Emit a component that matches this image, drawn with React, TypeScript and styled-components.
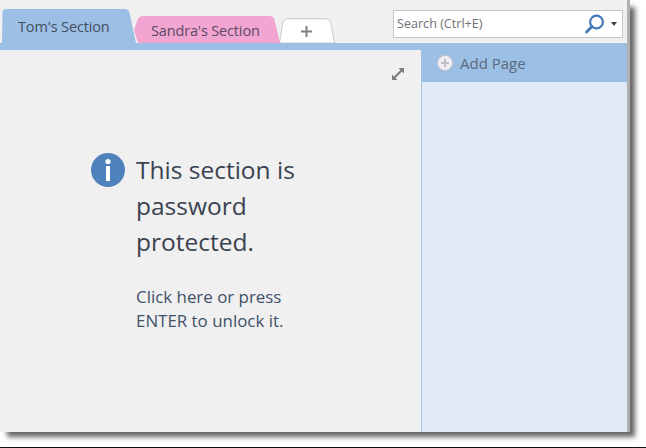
import React from "react";
import styled, { createGlobalStyle } from "styled-components";

const GlobalStyle = createGlobalStyle`
  html, body {
    margin: 0;
    padding: 0;
    background: #fff;
  }
  body {
    font-family: "Open Sans", "Noto Sans", "Liberation Sans", sans-serif;
  }
`;

const Shot = styled.div`
  width: 646px;
  height: 448px;
  box-sizing: border-box;
  border-bottom: 1px solid #111;
  background: #fff;
  overflow: hidden;
`;

const Win = styled.div`
  width: 630px;
  height: 432px;
  box-sizing: border-box;
  background: #f0f0f0;
  border-right: 3px solid #b0b0b0;
  box-shadow: 6px 6px 5px -1px #666;
  display: flex;
  flex-direction: column;
`;

const TopBar = styled.div`
  height: 43px;
  flex: none;
  display: flex;
  align-items: flex-end;
  padding-left: 2px;
  position: relative;
`;

const TabWrap = styled.div<{ $w: number; $h: number; $ml?: number; $z?: number }>`
  position: relative;
  width: ${(p) => p.$w}px;
  height: ${(p) => p.$h}px;
  margin-left: ${(p) => p.$ml ?? 0}px;
  z-index: ${(p) => p.$z ?? 0};
  display: flex;
  justify-content: flex-start;
`;

const TabShape = styled.svg`
  position: absolute;
  inset: 0;
  display: block;
`;

const TabLabel = styled.span<{ $color: string; $top: number; $left: number }>`
  position: relative;
  font-size: 14.5px;
  line-height: 20px;
  letter-spacing: -0.15px;
  color: ${(p) => p.$color};
  margin-top: ${(p) => p.$top}px;
  margin-left: ${(p) => p.$left}px;
`;

const PlusMark = styled.svg`
  position: relative;
  margin: 8px 0 0 22px;
`;

const SearchBox = styled.div`
  position: absolute;
  left: 393px;
  top: 10px;
  width: 230px;
  height: 28px;
  box-sizing: border-box;
  background: #fff;
  border: 1px solid #c6c6c6;
  display: flex;
  align-items: center;
  padding: 0 5px 0 3px;
`;

const SearchText = styled.span`
  flex: 1;
  font-size: 12.6px;
  color: #6f6f78;
  margin-top: -1px;
`;

const Caret = styled.span`
  width: 0;
  height: 0;
  margin-left: 6px;
  border-left: 3.5px solid transparent;
  border-right: 3.5px solid transparent;
  border-top: 4px solid #444;
`;

const Body = styled.div`
  flex: 1;
  display: flex;
  min-height: 0;
`;

const Main = styled.div`
  width: 421px;
  flex: none;
  display: flex;
  flex-direction: column;
`;

const Strip = styled.div`
  height: 7px;
  flex: none;
  background: #9bbfe5;
`;

const MainInner = styled.div`
  flex: 1;
  position: relative;
  display: flex;
  padding: 103px 0 0 91px;
  gap: 11px;
`;

const ExpandIcon = styled.svg`
  position: absolute;
  right: 16px;
  top: 17px;
`;

const InfoIcon = styled.svg`
  flex: none;
`;

const Message = styled.div`
  width: 200px;
`;

const Heading = styled.div`
  font-size: 24.5px;
  line-height: 36px;
  color: #3b4250;
  margin-top: -1px;
`;

const Hint = styled.div`
  font-size: 16.9px;
  line-height: 24px;
  color: #3f5068;
  margin-top: 25px;
`;

const Side = styled.div`
  flex: 1;
  background: #e1ebf6;
  border-left: 1px solid #a3c2e4;
  display: flex;
  flex-direction: column;
`;

const AddPage = styled.div`
  height: 39px;
  margin-left: -1px;
  background: #9bbfe5;
  display: flex;
  align-items: center;
  gap: 7px;
  padding-left: 16px;
  font-size: 15px;
  color: #5c6a7e;
`;

export default function App() {
  return (
    <>
      <GlobalStyle />
      <Shot>
        <Win>
          <TopBar>
            <TabWrap $w={134} $h={34} $z={2}>
              <TabShape width="134" height="34" viewBox="0 0 134 34">
                <path d="M0 34 L0.5 4 Q0.5 0 5 0 L122 0 Q127 0 127.5 4 L134 34 Z" fill="#9bbfe5" />
              </TabShape>
              <TabLabel $color="#45505f" $top={8} $left={16}>Tom's Section</TabLabel>
            </TabWrap>
            <TabWrap $w={147} $h={27} $ml={-2} $z={1}>
              <TabShape width="147" height="27" viewBox="0 0 147 27">
                <path d="M0 14 L3.5 4 Q5 0 9.5 0 L135 0 Q139.5 0 140.5 4 L146 27 L4 27 Z" fill="#f2a5d0" />
              </TabShape>
              <TabLabel $color="#5a4a68" $top={5} $left={17}>Sandra's Section</TabLabel>
            </TabWrap>
            <TabWrap $w={56} $h={25} $ml={-2}>
              <TabShape width="56" height="25" viewBox="0 0 56 25">
                <path d="M0.5 25 L4 4 Q4.8 0.7 9 0.7 L47 0.7 Q50.6 0.7 51.5 4 L55.5 25 Z" fill="#fff" stroke="#c9c9c9" strokeWidth="1" />
              </TabShape>
              <PlusMark width="11" height="11" viewBox="0 0 11 11">
                <path d="M5.5 0 V11 M0 5.5 H11" stroke="#808080" strokeWidth="2" />
              </PlusMark>
            </TabWrap>
            <SearchBox>
              <SearchText>Search (Ctrl+E)</SearchText>
              <svg width="21" height="20" viewBox="0 0 21 20" fill="none">
                <circle cx="12.5" cy="8" r="6.4" stroke="#4379b5" strokeWidth="2.2" />
                <path d="M8 12.6 L2.5 18" stroke="#4379b5" strokeWidth="2.8" strokeLinecap="round" />
              </svg>
              <Caret />
            </SearchBox>
          </TopBar>
          <Body>
            <Main>
              <Strip />
              <MainInner>
                <ExpandIcon width="14" height="14" viewBox="0 0 14 14" fill="none">
                  <path d="M3.5 10.5 L10.5 3.5" stroke="#7d7d7d" strokeWidth="2.2" />
                  <path d="M7.5 1 H13 V6.5 Z M1 7.5 V13 H6.5 Z" fill="#7d7d7d" />
                </ExpandIcon>
                <InfoIcon width="34" height="34" viewBox="0 0 34 34">
                  <circle cx="17" cy="17" r="17" fill="#4f81bd" />
                  <circle cx="17" cy="8.5" r="2.6" fill="#fff" />
                  <rect x="15" y="13" width="4" height="15" fill="#fff" />
                </InfoIcon>
                <Message>
                  <Heading>This section is password protected.</Heading>
                  <Hint>
                    Click here or press
                    <br />
                    ENTER to unlock it.
                  </Hint>
                </Message>
              </MainInner>
            </Main>
            <Side>
              <AddPage>
                <svg width="16" height="16" viewBox="0 0 16 16">
                  <circle cx="8" cy="8" r="7.5" fill="#f1eef3" stroke="#c4c4cc" />
                  <path d="M8 4 V12 M4 8 H12" stroke="#bdbdc4" strokeWidth="2" />
                </svg>
                Add Page
              </AddPage>
            </Side>
          </Body>
        </Win>
      </Shot>
    </>
  );
}
